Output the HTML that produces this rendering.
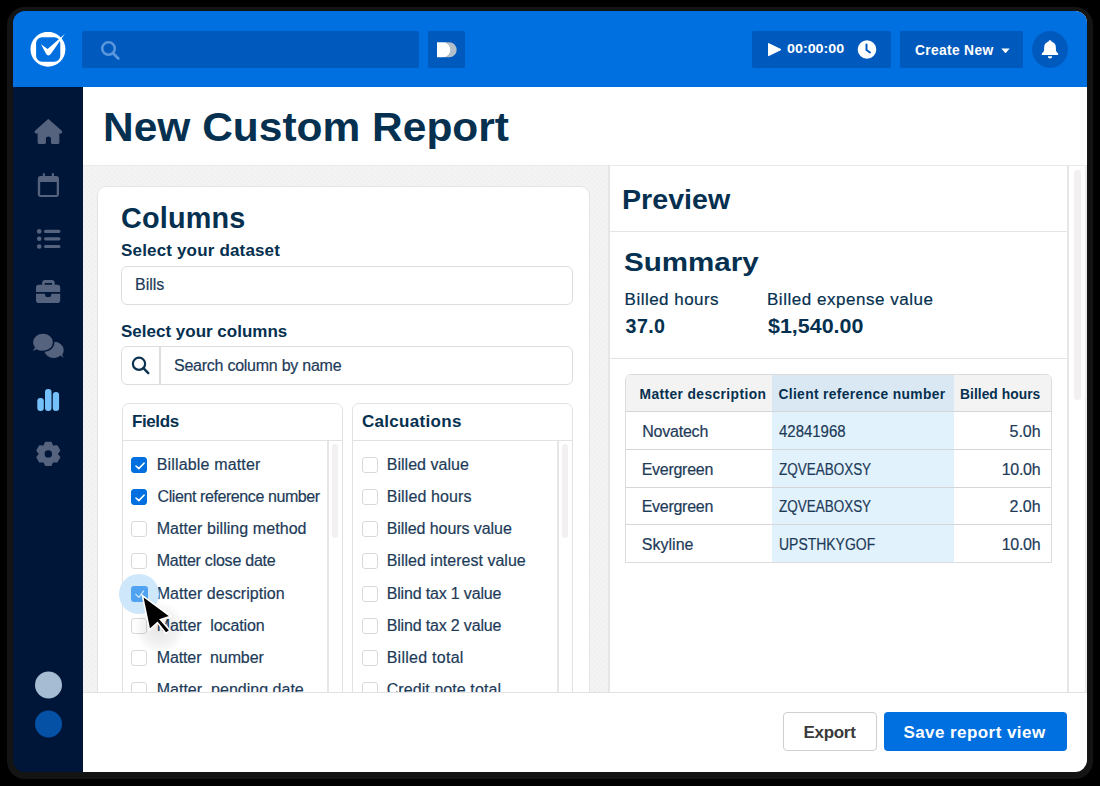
<!DOCTYPE html>
<html><head><meta charset="utf-8"><style>
*{box-sizing:border-box;margin:0;padding:0}
html,body{width:1100px;height:786px;overflow:hidden;background:#000;font-family:"Liberation Sans",sans-serif}
.abs{position:absolute}
.t{position:absolute;white-space:nowrap;line-height:1}
#frame{position:absolute;left:7px;top:7px;width:1086px;height:772px;background:#141414;border-radius:18px}
#win{position:absolute;left:13px;top:11px;width:1074px;height:761px;background:linear-gradient(to right,#001638 70px,#fff 70px);border-radius:12px;overflow:hidden}
#pg{position:absolute;left:-13px;top:-11px;width:1100px;height:786px}
.dk{background:#0059bd;border-radius:2px;position:absolute}
.gray{background-color:#f4f3f4}
.cb{position:absolute;width:16px;height:16px;border:1.5px solid #d9d9d9;border-radius:3px;background:#fff}
.cb.on{background:#0070e0;border-color:#0070e0}
.ln{position:absolute;background:#e4e4e4}
</style></head><body>
<div id="frame"></div>
<div id="win"><div id="pg">

<div class="abs" style="left:13px;top:11px;width:1074px;height:76px;background:#0070e0"></div>
<svg class="abs" style="left:30px;top:32px" width="37" height="37" viewBox="0 0 37 37">
  <circle cx="17.95" cy="17.25" r="17.45" fill="#fff"/>
  <rect x="6.1" y="5.2" width="24.2" height="24.6" rx="6" fill="#0070e0"/>
  <path d="M11 12.3 L17.6 16.9 L34.8 2 L21 21.8 Q18.4 25 16 21.8 Z" fill="#fff"/>
</svg>
<div class="dk" style="left:82px;top:31px;width:337px;height:37px"></div>
<svg class="abs" style="left:99px;top:40px" width="22" height="22" viewBox="0 0 22 22">
  <circle cx="9.5" cy="8.5" r="6.3" fill="none" stroke="#5b97dc" stroke-width="2.6"/>
  <path d="M14 13.2 L19.3 18.5" stroke="#5b97dc" stroke-width="2.8" stroke-linecap="round"/>
</svg>
<div class="dk" style="left:428px;top:31px;width:37px;height:37px"></div>
<svg class="abs" style="left:437px;top:42px" width="22" height="16" viewBox="0 0 22 16">
  <path d="M7 0.2 H12.2 A7.5 7.5 0 0 1 12.2 15.2 H7 Z" fill="#b5bfca"/>
  <path d="M0 0.2 H5.8 A7.5 7.5 0 0 1 5.8 15.2 H0 Z" fill="#fff"/>
</svg>
<div class="dk" style="left:752px;top:31px;width:139px;height:37px"></div>
<svg class="abs" style="left:768px;top:43px" width="14" height="14" viewBox="0 0 14 14"><path d="M0.5 0.5 L13 6.6 L0.5 12.7 Z" fill="#fff" stroke="#fff" stroke-linejoin="round"/></svg>
<svg class="abs" style="left:857px;top:40px" width="20" height="20" viewBox="0 0 20 20"><circle cx="10" cy="9.5" r="9.3" fill="#fff"/><path d="M9.5 4.5 V10 L13 12.5" stroke="#0059bd" stroke-width="2" fill="none" stroke-linecap="round"/></svg>
<div class="dk" style="left:900px;top:31px;width:123px;height:37px"></div>
<svg class="abs" style="left:1001px;top:48px" width="9" height="6" viewBox="0 0 9 6"><path d="M0.3 0.5 H8.7 L5 4.8 Q4.5 5.3 4 4.8 Z" fill="#fff"/></svg>
<div class="abs" style="left:1032px;top:31px;width:36px;height:37px;border-radius:50%;background:#0059bd"></div>
<svg class="abs" style="left:1041px;top:39px" width="18" height="21" viewBox="0 0 18 21">
  <path d="M9 1.2 Q10.4 1.2 10.4 2.5 Q14.9 3.8 14.9 8.8 V11 Q14.9 12.7 17.2 14.6 V15.9 H0.8 V14.6 Q3.1 12.7 3.1 11 V8.8 Q3.1 3.8 7.6 2.5 Q7.6 1.2 9 1.2 Z" fill="#fff"/>
  <path d="M6.8 17.3 H11.2 Q11.2 19.6 9 19.6 Q6.8 19.6 6.8 17.3 Z" fill="#fff"/>
</svg>
<div class="t" style="left:787.00px;top:43.40px;font-size:12.8px;font-weight:700;color:#fff;letter-spacing:0.000px;transform:scaleX(1.1176);transform-origin:0 0;">00:00:00</div>
<div class="t" style="left:915.00px;top:43.50px;font-size:13.8px;font-weight:700;color:#fff;letter-spacing:0.333px;">Create New</div>


<div class="abs" style="left:13px;top:87px;width:70px;height:690px;background:#001638"></div>
<svg class="abs" style="left:13px;top:87px" width="70" height="685" viewBox="0 76 70 685">
  <g fill="#55637e" stroke="#55637e" stroke-linejoin="round">
    <path stroke-width="1.2" d="M35.3 108.6 L22.4 120.2 Q21.8 121.5 23 121.9 H25.2 V131.4 Q25.2 132.5 26.3 132.5 H31.3 Q32.3 132.5 32.3 131.5 V127.2 Q32.3 124.9 35.4 124.9 Q38.5 124.9 38.5 127.2 V131.5 Q38.5 132.5 39.5 132.5 H44.7 Q45.8 132.5 45.8 131.4 V121.9 H47.8 Q49 121.5 48.4 120.2 Z"/>
    <path stroke="none" fill-rule="evenodd" d="M27.8 165 H43 Q46 165 46 168 V183.1 Q46 186.1 43 186.1 H27.8 Q24.8 186.1 24.8 183.1 V168 Q24.8 165 27.8 165 Z M27.2 171 V183.9 H43.7 V171 Z"/>
    <rect stroke="none" x="29.8" y="161.9" width="2.1" height="4" rx="1"/>
    <rect stroke="none" x="38.8" y="161.9" width="2.2" height="4" rx="1"/>
    <g stroke="none">
    <circle cx="26.2" cy="220.4" r="2.3"/><circle cx="26.2" cy="227.8" r="2.3"/><circle cx="26.2" cy="235.5" r="2.3"/>
    <rect x="31" y="218.8" width="16.5" height="3.2" rx="1.6"/><rect x="31" y="226.2" width="16.5" height="3.2" rx="1.6"/><rect x="31" y="233.9" width="16.5" height="3.2" rx="1.6"/>
    </g>
    <g stroke="none">
    <path fill-rule="evenodd" d="M32 269 H38.8 Q41.7 269 41.7 272 V274.5 H39 V272 H31.7 V274.5 H29.1 V272 Q29.1 269 32 269 Z"/>
    <path d="M25.8 273.8 H44.4 Q47.2 273.8 47.2 276.6 V281.1 H23 V276.6 Q23 273.8 25.8 273.8 Z"/>
    <path d="M23 282.7 H32.1 V284 Q32.1 285.9 34 285.9 H36.4 Q38.3 285.9 38.3 284 V282.7 H47.2 V289.3 Q47.2 292.1 44.4 292.1 H25.8 Q23 292.1 23 289.3 Z"/>
    </g>
    <g stroke="none">
    <path d="M50.6 346.9 L47.6 344.6 Q44.5 347.2 41 347 A9.7 8.1 0 1 1 50.7 338.9 Q50.7 341.6 49.2 343.6 Z"/>
    <ellipse cx="30" cy="331.3" rx="11.4" ry="10" fill="#001638"/>
    <path d="M19.6 339.9 L22.1 336.4 Q20.1 334.2 20.1 331.3 A9.9 8.5 0 1 1 30 339.8 Q26.2 339.8 23.6 338.2 Z"/>
    </g>
    <g transform="translate(35.3 442.9)">
    <path stroke-width="1.5" d="M4.09 -8.02 L2.74 -11.3 L-2.74 -11.3 L-4.09 -8.02 L-4.90 -7.55 L-8.6 -7.9 L-11.2 -3.4 L-8.99 -0.47 L-8.99 0.47 L-11.2 3.4 L-8.6 7.9 L-4.90 7.55 L-4.09 8.02 L-2.74 11.3 L2.74 11.3 L4.09 8.02 L4.90 7.55 L8.6 7.9 L11.2 3.4 L8.99 0.47 L8.99 -0.47 L11.2 -3.4 L8.6 -7.9 L4.90 -7.55Z"/>
    <circle cx="0" cy="0" r="3.7" fill="#001638" stroke="none"/>
    </g>
  </g>
  <g fill="#74c0fa">
    <rect x="24.3" y="387" width="6.5" height="13.1" rx="3"/>
    <rect x="32" y="377.9" width="6.5" height="22.2" rx="3"/>
    <rect x="39.8" y="381" width="6.3" height="19.1" rx="3"/>
  </g>
  <circle cx="35.5" cy="674" r="13.5" fill="#a6bcd2"/>
  <circle cx="35.5" cy="713" r="13.5" fill="#0451a5"/>
</svg>


<div class="abs" style="left:83px;top:87px;width:1004px;height:605px;overflow:hidden">
<div class="abs" style="left:-83px;top:-87px;width:1100px;height:786px">
<div class="t" style="left:102.86px;top:107.00px;font-size:40.6px;font-weight:700;color:#05304f;letter-spacing:0.000px;transform:scaleX(1.0469);transform-origin:0 0;">New Custom Report</div>
<svg class="abs" style="left:83px;top:165px" width="525" height="527"><defs><pattern id="dots" width="5" height="5" patternUnits="userSpaceOnUse"><rect width="5" height="5" fill="#f4f3f4"/><rect x="1" y="1" width="1" height="1" fill="#eae8ea"/><rect x="3.5" y="3.5" width="1" height="1" fill="#eae8ea"/></pattern></defs><rect width="525" height="527" fill="url(#dots)"/></svg>
<div class="ln" style="left:83px;top:165px;width:1004px;height:1px;background:#ebebeb"></div>
<div class="abs" style="left:97px;top:186px;width:493px;height:600px;background:#fff;border:1.5px solid #e3e3e3;border-radius:9px"></div>
<div class="abs" style="left:121px;top:266px;width:451.5px;height:38.5px;border:1.5px solid #dedede;border-radius:6px"></div>
<div class="abs" style="left:121px;top:346px;width:451.5px;height:38.5px;border:1.5px solid #dedede;border-radius:6px"></div>
<div class="ln" style="left:159px;top:347px;width:1.5px;height:37px;background:#dedede"></div>
<svg class="abs" style="left:131px;top:356.2px" width="20" height="19" viewBox="0 0 20 19">
  <circle cx="8" cy="7.8" r="6.1" fill="none" stroke="#0b3350" stroke-width="2.2"/>
  <path d="M12.4 12.2 L17.3 17.1" stroke="#0b3350" stroke-width="2.4" stroke-linecap="round"/>
</svg>
<div class="abs" style="left:122px;top:403px;width:221px;height:400px;border:1.5px solid #e2e2e2;border-radius:7px"></div>
<div class="ln" style="left:123px;top:439.5px;width:219px;height:1.5px;background:#e2e2e2"></div>
<div class="ln" style="left:327px;top:441px;width:1.5px;height:300px;background:#e6e6e6"></div>
<div class="abs" style="left:332px;top:444px;width:6px;height:94px;background:#f2f0f1;border-radius:3px"></div>
<div class="abs" style="left:352px;top:403px;width:221px;height:400px;border:1.5px solid #e2e2e2;border-radius:7px"></div>
<div class="ln" style="left:353px;top:439.5px;width:219px;height:1.5px;background:#e2e2e2"></div>
<div class="ln" style="left:557px;top:441px;width:1.5px;height:300px;background:#e6e6e6"></div>
<div class="abs" style="left:562px;top:444px;width:6px;height:94px;background:#f2f0f1;border-radius:3px"></div>
<div class="cb on" style="left:131px;top:457px"><svg class="abs" style="left:2.5px;top:3.5px" width="10" height="8" viewBox="0 0 10 8"><path d="M1 4 L3.8 6.6 L9 1.2" fill="none" stroke="#fff" stroke-width="1.6" stroke-linecap="round" stroke-linejoin="round"/></svg></div>
<div class="cb" style="left:362px;top:457px"></div>
<div class="cb on" style="left:131px;top:489px"><svg class="abs" style="left:2.5px;top:3.5px" width="10" height="8" viewBox="0 0 10 8"><path d="M1 4 L3.8 6.6 L9 1.2" fill="none" stroke="#fff" stroke-width="1.6" stroke-linecap="round" stroke-linejoin="round"/></svg></div>
<div class="cb" style="left:362px;top:489px"></div>
<div class="cb" style="left:131px;top:521.2px"></div>
<div class="cb" style="left:362px;top:521.2px"></div>
<div class="cb" style="left:131px;top:553.3px"></div>
<div class="cb" style="left:362px;top:553.3px"></div>
<div class="cb" style="left:131px;top:585.5px"></div>
<div class="cb" style="left:362px;top:585.5px"></div>
<div class="cb" style="left:131px;top:617.6px"></div>
<div class="cb" style="left:362px;top:617.6px"></div>
<div class="cb" style="left:131px;top:649.8px"></div>
<div class="cb" style="left:362px;top:649.8px"></div>
<div class="cb" style="left:131px;top:682px"></div>
<div class="cb" style="left:362px;top:682px"></div>
<div class="ln" style="left:608px;top:165px;width:1.5px;height:527px;background:#e6e6e6"></div>
<div class="ln" style="left:1067px;top:165px;width:1.5px;height:527px;background:#e6e6e6"></div>
<div class="ln" style="left:1085px;top:165px;width:1.5px;height:527px;background:#ececec"></div>
<div class="abs" style="left:1074px;top:170px;width:6.5px;height:230px;background:#f2f0f1;border-radius:3px"></div>
<div class="ln" style="left:609px;top:230.5px;width:458px;height:1.5px"></div>
<div class="ln" style="left:609px;top:357.5px;width:458px;height:1.5px"></div>
<div class="abs" style="left:625px;top:374.3px;width:427px;height:189px;border:1.5px solid #dcdcdc;border-radius:6px 6px 0 0;overflow:hidden;background:#fff">
  <div class="abs gray" style="left:0;top:0;width:427px;height:37px"></div>
  <div class="abs" style="left:146px;top:0;width:182px;height:37px;background:#dae8f4"></div>
  <div class="abs" style="left:146px;top:37px;width:182px;height:152px;background:#e2f2fc"></div>
  <div class="ln" style="left:0;top:36px;width:427px;height:1.2px;background:#d6d6d6"></div>
  <div class="ln" style="left:0;top:74px;width:427px;height:1.2px;background:#d6d6d6"></div>
  <div class="ln" style="left:0;top:111.5px;width:427px;height:1.2px;background:#d6d6d6"></div>
  <div class="ln" style="left:0;top:149px;width:427px;height:1.2px;background:#d6d6d6"></div>
</div>
<div class="t" style="left:121.00px;top:203.50px;font-size:28.8px;font-weight:700;color:#05304f;letter-spacing:0.167px;">Columns</div>
<div class="t" style="left:121.00px;top:242.00px;font-size:17px;font-weight:700;color:#05304f;letter-spacing:0.167px;">Select your dataset</div>
<div class="t" style="left:135.00px;top:277.30px;font-size:16px;font-weight:400;color:#1d3b59;letter-spacing:0.000px;-webkit-text-stroke:0.2px #1d3b59;">Bills</div>
<div class="t" style="left:121.00px;top:323.00px;font-size:17px;font-weight:700;color:#05304f;letter-spacing:0.000px;">Select your columns</div>
<div class="t" style="left:174.00px;top:358.40px;font-size:16px;font-weight:400;color:#1d3b59;letter-spacing:-0.250px;-webkit-text-stroke:0.2px #1d3b59;">Search column by name</div>
<div class="t" style="left:132.00px;top:413.40px;font-size:17px;font-weight:700;color:#05304f;letter-spacing:-0.400px;">Fields</div>
<div class="t" style="left:362.00px;top:413.40px;font-size:17px;font-weight:700;color:#05304f;letter-spacing:0.300px;">Calcuations</div>
<div class="t" style="left:622.38px;top:186.70px;font-size:27px;font-weight:700;color:#05304f;letter-spacing:0.000px;transform:scaleX(1.06);transform-origin:0 0;">Preview</div>
<div class="t" style="left:624.49px;top:249.00px;font-size:26.6px;font-weight:700;color:#05304f;letter-spacing:0.000px;transform:scaleX(1.1117);transform-origin:0 0;">Summary</div>
<div class="t" style="left:624.60px;top:290.70px;font-size:17px;font-weight:400;color:#05304f;letter-spacing:0.473px;-webkit-text-stroke:0.2px #05304f;">Billed hours</div>
<div class="t" style="left:625.60px;top:316.60px;font-size:19.7px;font-weight:700;color:#05304f;letter-spacing:0.333px;">37.0</div>
<div class="t" style="left:767.00px;top:290.70px;font-size:17px;font-weight:400;color:#05304f;letter-spacing:0.526px;-webkit-text-stroke:0.2px #05304f;">Billed expense value</div>
<div class="t" style="left:768.00px;top:316.60px;font-size:19.7px;font-weight:700;color:#05304f;letter-spacing:0.000px;transform:scaleX(1.0897);transform-origin:0 0;">$1,540.00</div>
<div class="t" style="left:639.50px;top:387.50px;font-size:13.8px;font-weight:700;color:#05304f;letter-spacing:0.400px;">Matter description</div>
<div class="t" style="left:778.40px;top:387.50px;font-size:13.8px;font-weight:700;color:#05304f;letter-spacing:0.364px;">Client reference number</div>
<div class="t" style="left:960.00px;top:387.50px;font-size:13.8px;font-weight:700;color:#05304f;letter-spacing:0.045px;">Billed hours</div>
<div class="t" style="left:156.70px;top:457.00px;font-size:16px;font-weight:400;color:#1d3b59;letter-spacing:0.164px;-webkit-text-stroke:0.2px #1d3b59;">Billable matter</div>
<div class="t" style="left:157.50px;top:489.00px;font-size:16px;font-weight:400;color:#1d3b59;letter-spacing:-0.409px;-webkit-text-stroke:0.2px #1d3b59;">Client reference number</div>
<div class="t" style="left:156.70px;top:521.20px;font-size:16px;font-weight:400;color:#1d3b59;letter-spacing:0.065px;-webkit-text-stroke:0.2px #1d3b59;">Matter billing method</div>
<div class="t" style="left:156.70px;top:553.30px;font-size:16px;font-weight:400;color:#1d3b59;letter-spacing:-0.231px;-webkit-text-stroke:0.2px #1d3b59;">Matter close date</div>
<div class="t" style="left:156.70px;top:585.50px;font-size:16px;font-weight:400;color:#1d3b59;letter-spacing:0.047px;-webkit-text-stroke:0.2px #1d3b59;">Matter description</div>
<div class="t" style="left:156.70px;top:617.60px;font-size:16px;font-weight:400;color:#1d3b59;letter-spacing:-0.087px;-webkit-text-stroke:0.2px #1d3b59;">Matter&nbsp; location</div>
<div class="t" style="left:156.70px;top:649.80px;font-size:16px;font-weight:400;color:#1d3b59;letter-spacing:-0.108px;-webkit-text-stroke:0.2px #1d3b59;">Matter&nbsp; number</div>
<div class="t" style="left:156.70px;top:682.00px;font-size:16px;font-weight:400;color:#1d3b59;letter-spacing:0.016px;-webkit-text-stroke:0.2px #1d3b59;">Matter&nbsp; pending date</div>
<div class="t" style="left:386.70px;top:457.00px;font-size:16px;font-weight:400;color:#1d3b59;letter-spacing:0.027px;-webkit-text-stroke:0.2px #1d3b59;">Billed value</div>
<div class="t" style="left:386.70px;top:489.00px;font-size:16px;font-weight:400;color:#1d3b59;letter-spacing:0.100px;-webkit-text-stroke:0.2px #1d3b59;">Billed hours</div>
<div class="t" style="left:386.70px;top:521.20px;font-size:16px;font-weight:400;color:#1d3b59;letter-spacing:-0.071px;-webkit-text-stroke:0.2px #1d3b59;">Billed hours value</div>
<div class="t" style="left:386.70px;top:553.30px;font-size:16px;font-weight:400;color:#1d3b59;letter-spacing:0.015px;-webkit-text-stroke:0.2px #1d3b59;">Billed interest value</div>
<div class="t" style="left:386.70px;top:585.50px;font-size:16px;font-weight:400;color:#1d3b59;letter-spacing:-0.169px;-webkit-text-stroke:0.2px #1d3b59;">Blind tax 1 value</div>
<div class="t" style="left:386.70px;top:617.60px;font-size:16px;font-weight:400;color:#1d3b59;letter-spacing:-0.169px;-webkit-text-stroke:0.2px #1d3b59;">Blind tax 2 value</div>
<div class="t" style="left:386.70px;top:649.80px;font-size:16px;font-weight:400;color:#1d3b59;letter-spacing:0.264px;-webkit-text-stroke:0.2px #1d3b59;">Billed total</div>
<div class="t" style="left:386.70px;top:682.00px;font-size:16px;font-weight:400;color:#1d3b59;letter-spacing:0.081px;-webkit-text-stroke:0.2px #1d3b59;">Credit note total</div>
<div class="t" style="left:642.30px;top:423.70px;font-size:16px;font-weight:400;color:#1d3b59;letter-spacing:-0.229px;-webkit-text-stroke:0.2px #1d3b59;">Novatech</div>
<div class="t" style="left:779.40px;top:423.70px;font-size:16px;font-weight:400;color:#1d3b59;letter-spacing:0.000px;-webkit-text-stroke:0.2px #1d3b59;transform:scaleX(0.9352);transform-origin:0 0;">42841968</div>
<div class="t" style="left:1009.50px;top:423.70px;font-size:16px;font-weight:400;color:#1d3b59;letter-spacing:0.000px;-webkit-text-stroke:0.2px #1d3b59;">5.0h</div>
<div class="t" style="left:641.70px;top:461.50px;font-size:16px;font-weight:400;color:#1d3b59;letter-spacing:-0.275px;-webkit-text-stroke:0.2px #1d3b59;">Evergreen</div>
<div class="t" style="left:779.40px;top:461.50px;font-size:16px;font-weight:400;color:#1d3b59;letter-spacing:0.000px;-webkit-text-stroke:0.2px #1d3b59;transform:scaleX(0.8422);transform-origin:0 0;">ZQVEABOXSY</div>
<div class="t" style="left:1001.80px;top:461.50px;font-size:16px;font-weight:400;color:#1d3b59;letter-spacing:-0.325px;-webkit-text-stroke:0.2px #1d3b59;">10.0h</div>
<div class="t" style="left:641.70px;top:499.30px;font-size:16px;font-weight:400;color:#1d3b59;letter-spacing:-0.275px;-webkit-text-stroke:0.2px #1d3b59;">Evergreen</div>
<div class="t" style="left:779.40px;top:499.30px;font-size:16px;font-weight:400;color:#1d3b59;letter-spacing:0.000px;-webkit-text-stroke:0.2px #1d3b59;transform:scaleX(0.8422);transform-origin:0 0;">ZQVEABOXSY</div>
<div class="t" style="left:1009.50px;top:499.30px;font-size:16px;font-weight:400;color:#1d3b59;letter-spacing:0.000px;-webkit-text-stroke:0.2px #1d3b59;">2.0h</div>
<div class="t" style="left:641.70px;top:537.00px;font-size:16px;font-weight:400;color:#1d3b59;letter-spacing:0.033px;-webkit-text-stroke:0.2px #1d3b59;">Skyline</div>
<div class="t" style="left:778.53px;top:537.00px;font-size:16px;font-weight:400;color:#1d3b59;letter-spacing:0.000px;-webkit-text-stroke:0.2px #1d3b59;transform:scaleX(0.8725);transform-origin:0 0;">UPSTHKYGOF</div>
<div class="t" style="left:1001.80px;top:537.00px;font-size:16px;font-weight:400;color:#1d3b59;letter-spacing:-0.325px;-webkit-text-stroke:0.2px #1d3b59;">10.0h</div>
</div></div>


<div class="abs" style="left:119px;top:574px;width:40px;height:40px;border-radius:50%;background:#cfe7fb"></div>
<div class="abs" style="left:131px;top:585.5px;width:16.5px;height:16.5px;border-radius:3px;background:#50a3f0"><svg class="abs" style="left:2.5px;top:3.5px" width="11" height="10" viewBox="0 0 11 10"><path d="M1.8 5.4 L4.9 8.4 L9.5 2.1" fill="none" stroke="#d0e6fa" stroke-width="1.3" stroke-linecap="round" stroke-linejoin="round"/></svg></div>
<div class="abs" style="left:134px;top:602px;width:52px;height:52px;border-radius:50%;background:radial-gradient(circle at 50% 50%, rgba(0,0,0,0.10), rgba(0,0,0,0.05) 45%, rgba(0,0,0,0) 70%)"></div>
<svg class="abs" style="left:133px;top:586px" width="50" height="60" viewBox="133 586 50 60">
  <path d="M142.4 595.7 L170.5 616.3 L160.5 619.6 L170 630.4 L166 633.4 L157.5 622.6 L149.5 629.8 Z" fill="#000" stroke="#fff" stroke-width="1.6" stroke-linejoin="miter"/>
</svg>


<div class="ln" style="left:83px;top:692px;width:1004px;height:1.2px;background:#e2e2e2"></div>
<div class="abs" style="left:783px;top:712px;width:94px;height:39px;border:1.5px solid #cfcfcf;border-radius:4px;background:#fff"></div>
<div class="abs" style="left:884px;top:712px;width:182.5px;height:39px;border-radius:4px;background:#0070e0"></div>
<div class="t" style="left:803.50px;top:723.70px;font-size:17px;font-weight:700;color:#3a3a3a;letter-spacing:-0.300px;">Export</div>
<div class="t" style="left:903.40px;top:723.70px;font-size:17px;font-weight:700;color:#fff;letter-spacing:0.440px;">Save report view</div>

</div></div>
</body></html>
